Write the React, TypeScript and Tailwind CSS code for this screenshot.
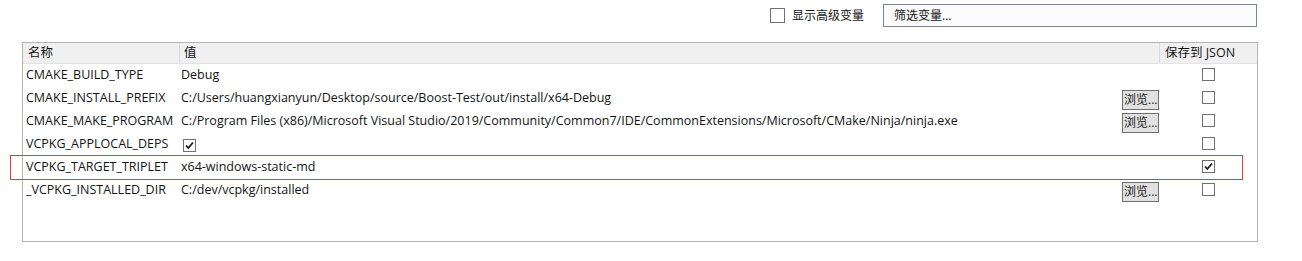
import React from 'react';

type Row = {
  name: string;
  value?: string;
  bool?: boolean;
  browse?: boolean;
  json: boolean;
};

const rows: Row[] = [
  { name: 'CMAKE_BUILD_TYPE', value: 'Debug', json: false },
  { name: 'CMAKE_INSTALL_PREFIX', value: 'C:/Users/huangxianyun/Desktop/source/Boost-Test/out/install/x64-Debug', browse: true, json: false },
  { name: 'CMAKE_MAKE_PROGRAM', value: 'C:/Program Files (x86)/Microsoft Visual Studio/2019/Community/Common7/IDE/CommonExtensions/Microsoft/CMake/Ninja/ninja.exe', browse: true, json: false },
  { name: 'VCPKG_APPLOCAL_DEPS', bool: true, json: false },
  { name: 'VCPKG_TARGET_TRIPLET', value: 'x64-windows-static-md', json: true },
  { name: '_VCPKG_INSTALLED_DIR', value: 'C:/dev/vcpkg/installed', browse: true, json: false },
];

const font = { fontFamily: '"Open Sans", "Noto Sans CJK SC", sans-serif' };

const CheckBox: React.FC<{ checked?: boolean }> = ({ checked }) => (
  <div className="w-[13px] h-[13px] border border-[#707070] bg-white flex items-center justify-center">
    {checked && (
      <svg width="11" height="11" viewBox="0 0 11 11">
        <path d="M2 5.5 L4.3 8 L9 2.5" fill="none" stroke="#1a1a1a" strokeWidth="1.8" />
      </svg>
    )}
  </div>
);

const BrowseButton = () => (
  <div className="w-[37px] h-[20px] border border-[#6f6f6f] bg-[#e1e1e1] text-[12px] leading-[18px] text-[#1a1a1a] pl-[1px] mt-[3px]">
    浏览...
  </div>
);

const App: React.FC = () => {
  return (
    <div className="w-[1302px] h-[261px] bg-white relative text-[12.5px] text-[#141414]" style={font}>
      <div className="flex justify-end items-center pr-[45px] pt-[4px] h-[27px] text-[12px]">
        <div className="flex items-center mr-[19px]">
          <div className="w-[15px] h-[15px] border border-[#707070] bg-white" />
          <span className="ml-[7px]">显示高级变量</span>
        </div>
        <div className="w-[374px] h-[23px] border border-[#7a8598] bg-[#fbfbfb] pl-[10px] leading-[21px]">筛选变量...</div>
      </div>

      <div className="ml-[22px] mt-[15px] w-[1236px] h-[200px] border border-[#b4b4b4]">
        <div className="flex h-[21px] bg-[#f0f0f0] border-b border-[#e3e3e3] leading-[20px]">
          <div className="w-[157px] pl-[5px] border-r border-[#dadada]">名称</div>
          <div className="w-[980px] pl-[4px] border-r border-[#dadada]">值</div>
          <div className="flex-1 pl-[5px] whitespace-nowrap">保存到 JSON</div>
        </div>
        {rows.map((r) => (
          <div key={r.name} className="flex h-[23px] leading-[22px]">
            <div className="w-[157px] pl-[3px] whitespace-nowrap">{r.name}</div>
            <div className="w-[980px] pl-[1px] flex items-start justify-between pr-[1px]">
              {r.bool ? (
                <div className="mt-[6px] ml-[2px]"><CheckBox checked /></div>
              ) : (
                <span className="whitespace-nowrap">{r.value}</span>
              )}
              {r.browse && <BrowseButton />}
            </div>
            <div className="flex-1 flex justify-center pt-[4px]">
              <CheckBox checked={r.json} />
            </div>
          </div>
        ))}
      </div>

      {/* highlight annotation */}
      <div className="absolute left-[10px] top-[155px] w-[1233px] h-[25px] border border-[#e8393d] pointer-events-none" />
    </div>
  );
};

export default App;
